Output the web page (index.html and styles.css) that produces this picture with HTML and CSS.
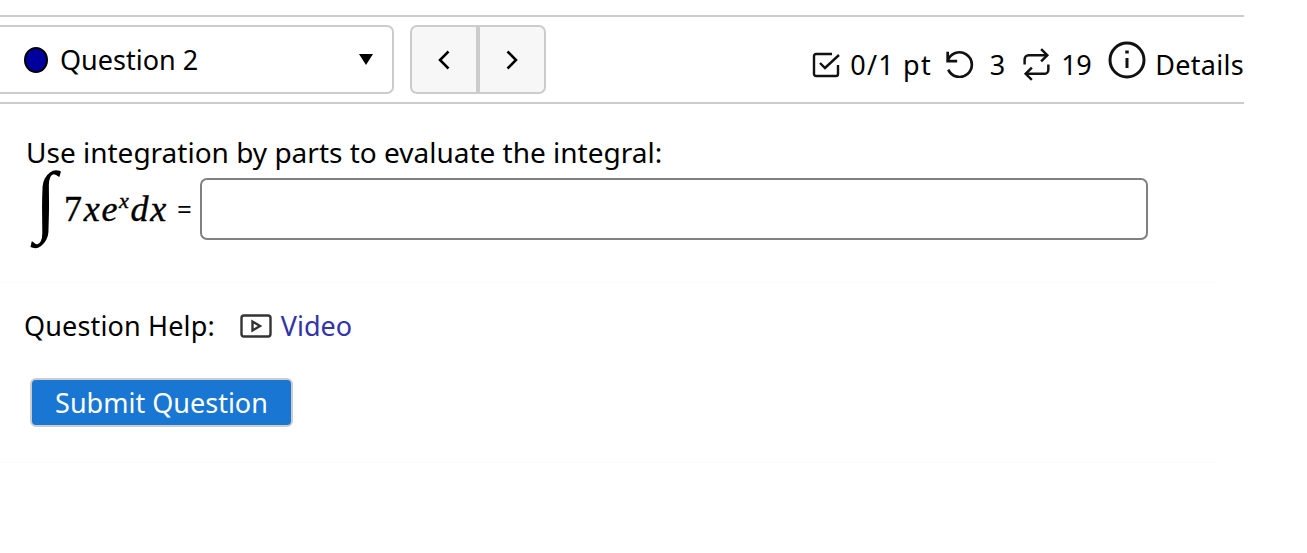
FILE: index.html
```html
<!DOCTYPE html>
<html lang="en">
<head>
<meta charset="utf-8">
<title>Question 2</title>
<link rel="stylesheet" href="styles.css">
</head>
<body>
<div class="page">
  <header class="bar">
    <div class="select">
      <span class="dot"></span>
      <span class="select-label">Question 2</span>
      <span class="caret"></span>
    </div>
    <div class="pager">
      <button class="page-btn" type="button" aria-label="Previous">
        <svg class="chev" viewBox="0 0 12 20"><path d="M10.500 1.500 2 10l8.500 8.500"/></svg>
      </button>
      <button class="page-btn" type="button" aria-label="Next">
        <svg class="chev" viewBox="0 0 12 20"><path d="M1.500 1.500 10 10l-8.500 8.500"/></svg>
      </button>
    </div>
    <div class="meta">
      <svg class="ico ico-check" viewBox="0 0 28 28"><path d="M26 14v9a2 2 0 0 1-2 2H4a2 2 0 0 1-2-2V5a2 2 0 0 1 2-2h16"/><path d="M8 12l5 5L27 4"/></svg>
      <span class="meta-text pts">0/1 pt</span>
      <svg class="ico ico-retry" viewBox="3.500 1.500 25 25"><path d="M5 11.500A11 11 0 1 1 5.500 19"/><path d="M5 3v8.500h8.500"/></svg>
      <span class="meta-text retry">3</span>
      <svg class="ico ico-swap" viewBox="2 0 26 32"><path d="M19 1l6 6-6 6"/><path d="M3 16v-5a4 4 0 0 1 4-4h18"/><path d="M10 31l-6-6 6-6"/><path d="M26 16v5a4 4 0 0 1-4 4H4"/></svg>
      <span class="meta-text swap">19</span>
      <svg class="ico ico-info" viewBox="0 0 38 38"><circle cx="19" cy="19" r="17"/><path d="M19 17v10" /><path class="info-dot" d="M19 9.500v3"/></svg>
      <span class="meta-text details">Details</span>
    </div>
  </header>

  <section class="question">
    <p class="prompt">Use integration by parts to evaluate the integral:</p>
    <div class="answer-row">
      <span class="integral">∫</span>
      <span class="math"><span class="digit">7</span>xe<sup>x</sup>dx</span>
      <span class="equals">=</span>
      <input class="answer" type="text" aria-label="Answer">
    </div>
  </section>

  <section class="help">
    <span class="help-label">Question Help:</span>
    <svg class="video-ico" viewBox="0 0 32 24"><rect x="1.500" y="1.500" width="29" height="21" rx="2.500"/><path d="M12.500 7.500v9l7.500-4.500z"/></svg>
    <a class="video-link" href="#">Video</a>
  </section>

  <div class="actions">
    <button class="submit" type="button">Submit Question</button>
  </div>
</div>
</body>
</html>
```

FILE: styles.css
```css
* { box-sizing: border-box; }
html, body { margin: 0; padding: 0; background: #fff; overflow: hidden; }
body { font-family: "Noto Sans", sans-serif; color: #000; height: 553px; }

.page { width: 1244px; padding-top: 15px; }

.bar {
  height: 89px;
  border-top: 2px solid #ccc;
  border-bottom: 2px solid #ccc;
  padding-top: 8px;
  display: flex;
  align-items: flex-start;
}

.select {
  width: 394px;
  height: 69px;
  border: 2px solid #ccc;
  border-left: 0;
  border-radius: 0 7px 7px 0;
  display: flex;
  align-items: center;
  padding: 0 16px 0 24px;
}
.dot {
  width: 24px;
  height: 26px;
  border-radius: 50%;
  background: #00009f;
  border: 2.500px solid #000;
  flex: none;
}
.select-label { margin-left: 12px; font-size: 27px; flex: 1; }
.caret {
  width: 0;
  height: 0;
  border-left: 7.500px solid transparent;
  border-right: 7.500px solid transparent;
  border-top: 11px solid #000;
  margin-right: 3px;
}

.pager {
  margin-left: 16px;
  width: 136px;
  height: 69px;
  border: 2px solid #ccc;
  border-radius: 7px;
  background: #f7f7f7;
  display: flex;
  overflow: hidden;
}
.page-btn {
  flex: 1;
  border: 0;
  padding: 0;
  background: transparent;
  display: flex;
  align-items: center;
  justify-content: center;
}
.page-btn + .page-btn { border-left: 4px solid #ccc; }
.chev { width: 12px; height: 20px; fill: none; stroke: #000; stroke-width: 2.500; }

.meta {
  margin-left: auto;
  height: 77px;
  display: flex;
  align-items: center;
}
.meta-text { font-size: 27px; line-height: 30px; padding-top: 3px; }
.pts { letter-spacing: 1.200px; }
.details { letter-spacing: 0.300px; }
.swap { letter-spacing: -0.500px; }
.ico { fill: none; stroke: #111; stroke-width: 2.400; flex: none; }
.ico-check { width: 28px; height: 28px; margin-top: 3px; margin-right: 10px; }
.ico-retry { width: 30px; height: 28px; margin: 0 15px 0 13px; }
.ico-swap { width: 30px; height: 33px; margin: 2px 9px 0 17px; }
.ico-info { width: 38px; height: 38px; margin: -7px 9px 0 17px; stroke-width: 3; }
.info-dot { stroke-width: 3.500; }

.question {
  padding: 30px 0 0 26px;
  height: 179px;
  margin-right: 27px;
  border-bottom: 1px solid #fbfbfb;
}
.prompt { margin: 0; font-size: 28px; line-height: 36px; }
.answer-row { display: flex; align-items: center; margin-top: -1px; height: 80px; }
.integral {
  font-family: "Liberation Serif", serif;
  font-size: 62px;
  line-height: 60px;
  width: 38px;
  transform: translate(6px, -9px) scale(1.300, 1.280);
  transform-origin: 0 50%;
  padding-left: 2px;
}
.math {
  font-family: "Liberation Serif", serif;
  font-style: italic;
  font-size: 36px;
  letter-spacing: 1.700px;
  width: 113px;
  -webkit-text-stroke: 0.400px #000;
}
.digit { font-style: normal; }
.math sup { font-size: 22px; line-height: 0; }
.equals { font-size: 26px; width: 23px; }
.answer {
  width: 948px;
  height: 62px;
  border: 2px solid #808080;
  border-radius: 7px;
  background: #fff;
}

.help { display: flex; align-items: center; padding: 23px 0 0 24px; height: 62px; }
.help-label { font-size: 27px; letter-spacing: 0.150px; }
.video-ico { width: 32px; height: 24px; margin: 0 9px 0 25px; fill: none; stroke: #333; stroke-width: 2.400; }
.video-link { font-size: 27px; color: #3333aa; text-decoration: none; }

.actions {
  padding: 0 0 35px 30px;
  margin: 33px 27px 0 0;
  border-bottom: 1px solid #fbfbfb;
}
.submit {
  width: 263px;
  height: 49px;
  border: 2px solid #ccc;
  border-radius: 6px;
  background: #1976d2;
  color: #fff;
  font-family: "Noto Sans", sans-serif;
  font-size: 27px;
  padding: 0;
}
```
